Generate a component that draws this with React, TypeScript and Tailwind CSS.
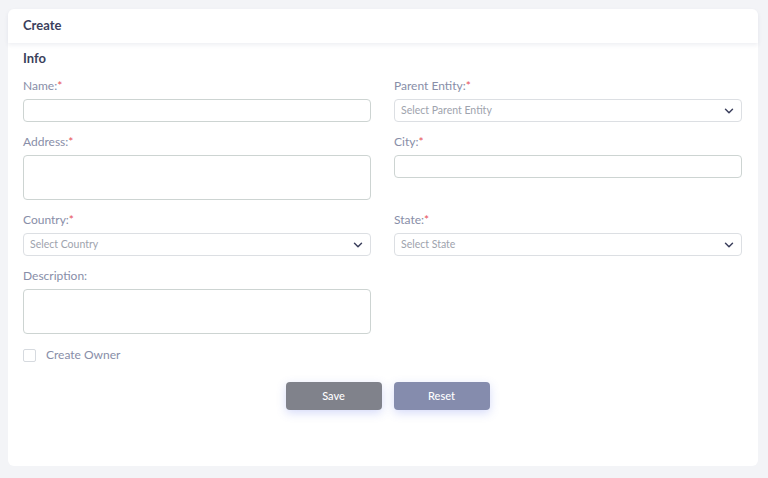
import { ChevronDown } from "lucide-react";

const Label = ({ text, required }: { text: string; required?: boolean }) => (
  <label className="block h-4 text-[12px] leading-4 text-[#888ea8]">
    {text}
    {required && <span className="text-[#e7515a]">*</span>}
  </label>
);

const Input = () => (
  <input className="mt-[5px] block h-[23px] w-full rounded border border-[#cdd4d2] bg-white outline-none" />
);

const TextArea = () => (
  <textarea className="mt-[5px] block h-[45px] w-full resize-none rounded border border-[#cdd4d2] bg-white outline-none" />
);

const Select = ({ placeholder }: { placeholder: string }) => (
  <div className="mt-[5px] flex h-[23px] w-full items-center justify-between rounded border border-[#dcdfe3] bg-white pl-[6px] pr-[5px]">
    <span className="text-[10.5px] text-[#9ea3ad]">{placeholder}</span>
    <ChevronDown className="h-[14px] w-[14px] text-[#3b3f5c]" strokeWidth={2.5} />
  </div>
);

const App = () => {
  return (
    <div
      className="min-h-[478px] w-full bg-[#f3f4f7] pl-2 pr-[10px] pt-[9px] pb-3"
      style={{ fontFamily: "Lato, 'Noto Sans', sans-serif" }}
    >
      <div className="h-[457px] rounded-md bg-white">
        <div className="flex h-[34px] items-center rounded-t-md px-[15px] shadow-[0_2px_4px_rgba(40,50,100,0.08)]">
          <h1 className="text-[13px] font-bold text-[#3b3f5c]">Create</h1>
        </div>

        <div className="pl-[15px] pr-[16px] pt-[7px]">
          <h2 className="h-4 text-[13px] font-bold leading-4 text-[#3b3f5c]">Info</h2>

          <div className="mt-3 grid grid-cols-2 gap-x-[23px] gap-y-3">
            <div>
              <Label text="Name:" required />
              <Input />
            </div>
            <div>
              <Label text="Parent Entity:" required />
              <Select placeholder="Select Parent Entity" />
            </div>

            <div>
              <Label text="Address:" required />
              <TextArea />
            </div>
            <div>
              <Label text="City:" required />
              <Input />
            </div>

            <div>
              <Label text="Country:" required />
              <Select placeholder="Select Country" />
            </div>
            <div>
              <Label text="State:" required />
              <Select placeholder="Select State" />
            </div>

            <div>
              <Label text="Description:" />
              <TextArea />
            </div>
            <div />
          </div>

          <div className="mt-[13px] flex h-4 items-center gap-[10px]">
            <span className="h-[13px] w-[13px] rounded-[2px] border border-[#d6dadf] bg-white" />
            <span className="text-[12px] text-[#888ea8]">Create Owner</span>
          </div>

          <div className="mt-[19px] flex justify-center gap-3 pl-[10px]">
            <button className="h-[28px] w-[96px] rounded bg-[#80828b] text-[11px] font-medium text-white shadow-[0_3px_10px_rgba(90,110,230,0.25)]">
              Save
            </button>
            <button className="h-[28px] w-[96px] rounded bg-[#858cad] text-[11px] font-medium text-white shadow-[0_3px_10px_rgba(90,110,230,0.25)]">
              Reset
            </button>
          </div>
        </div>
      </div>
    </div>
  );
};

export default App;
